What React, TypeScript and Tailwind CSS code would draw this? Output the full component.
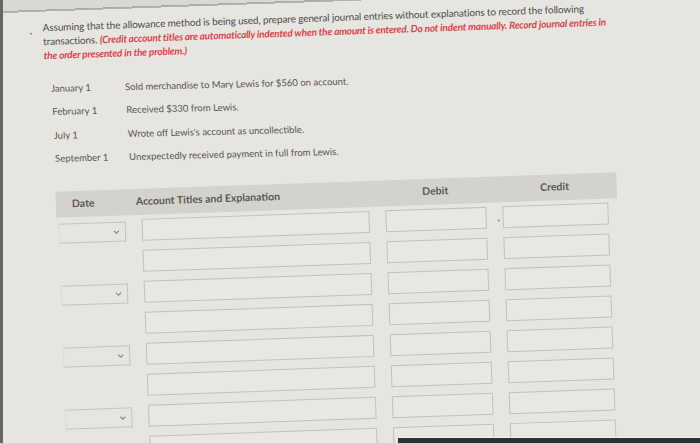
import React from 'react';

const transactions = [
  { date: 'January 1', text: 'Sold merchandise to Mary Lewis for $560 on account.' },
  { date: 'February 1', text: 'Received $330 from Lewis.' },
  { date: 'July 1', text: "Wrote off Lewis's account as uncollectible." },
  { date: 'September 1', text: 'Unexpectedly received payment in full from Lewis.' },
];

const rows = [0, 1, 2, 3, 4, 5, 6, 7];

const Chevron = () => (
  <svg width="7" height="5" viewBox="0 0 7 5" fill="none">
    <path d="M1 1l2.5 2.5L6 1" stroke="#8a8883" strokeWidth="1.2" />
  </svg>
);

const Box = () => <div className="h-[22px] border border-[#c3c1bb] bg-[#e9e7e2]" />;

const App = () => {
  return (
    <div className="relative h-[443px] w-[700px] overflow-hidden border-l-[3px] border-[#666561] bg-[linear-gradient(178deg,#dad8d3_0,#dad8d3_11px,#a9a7a2_11px,#b9b7b2_13px,#e7e5e0_13px)] font-['Lato',sans-serif]">
      {/* instructions */}
      <div className="relative ml-[40px] mt-[10px] w-[585px] -rotate-[2deg] whitespace-nowrap text-[10px] leading-[14px] tracking-[-0.12px] text-[#4d4c4a]">
        <span className="absolute -left-[13px] top-[12px] h-[2px] w-[2px] rounded-full bg-[#8b8984]" />
        Assuming that the allowance method is being used, prepare general journal entries without explanations to record the following
        <br />
        transactions.{' '}
        <span className="font-bold italic tracking-[-0.2px] text-[#e0414c]">
          (Credit account titles are automatically indented when the amount is entered. Do not indent manually. Record journal entries in
          <br />
          the order presented in the problem.)
        </span>
      </div>

      {/* transactions */}
      <div className="ml-[50px] mt-[17px] -rotate-[1.4deg] skew-x-[2deg] text-[9.5px] text-[#575653]">
        {transactions.map((t) => (
          <div key={t.date} className="flex h-[23.5px] items-center">
            <div className="w-[74px]">{t.date}</div>
            <div>{t.text}</div>
          </div>
        ))}
      </div>

      {/* journal table */}
      <div className="ml-[57px] mt-[19px] w-[561px] -rotate-[2deg]">
        <div className="grid h-[26px] grid-cols-[67px_228px_101px_106px] items-center gap-x-4 bg-[#d3d2cd] pl-[2px] text-[10.5px] font-bold text-[#5a5955]">
          <div className="pl-[14px]">Date</div>
          <div className="-ml-[5px]">Account Titles and Explanation</div>
          <div className="text-center">Debit</div>
          <div className="text-center">Credit</div>
        </div>
        <div className="mt-[4px] flex flex-col gap-[9px] pl-[2px]">
          {rows.map((i) => (
            <div key={i} className="grid grid-cols-[67px_228px_101px_106px] gap-x-4">
              <div className="pt-[2px]">
                {i % 2 === 0 && (
                  <div className="flex h-[20px] items-center justify-end border border-[#c6c4be] border-l-[#dedcd6] pr-[5px]">
                    <Chevron />
                  </div>
                )}
              </div>
              <Box />
              <Box />
              <div className="relative">
                <Box />
                {i === 0 && <span className="absolute -left-[5px] top-[13px] h-[2px] w-[2px] rounded-full bg-[#8e8c87]" />}
              </div>
            </div>
          ))}
        </div>
      </div>

      {/* monitor edge */}
      <div className="absolute bottom-0 left-[395px] right-0 h-[6px] border-t border-[#f1f0eb] bg-[#2c3238]" />
    </div>
  );
};

export default App;
